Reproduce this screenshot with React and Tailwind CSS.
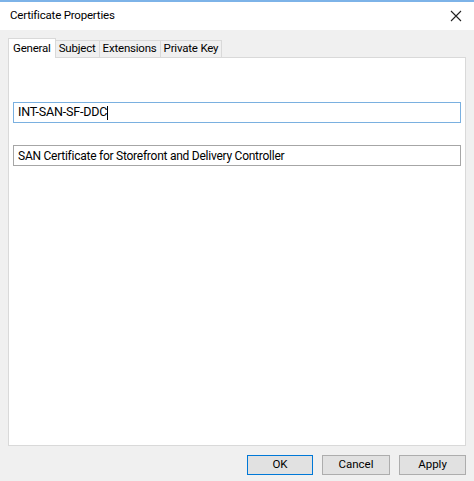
import React from 'react';

const tabs = ['General', 'Subject', 'Extensions', 'Private Key'];

export default function App() {
    return (
        <div className="w-[474px] h-[481px] bg-[#f0f0f0] flex flex-col overflow-hidden text-[#000] text-[12px]" style={{ fontFamily: 'Roboto, "Noto Sans", sans-serif' }}>
            <div className="h-[2px] bg-[#7db3e8]" />
            <div className="h-[28px] bg-white flex items-center justify-between pl-[10px] pr-[10px]">
                <span className="text-[11.5px] tracking-[-0.2px]">Certificate Properties</span>
                <svg width="12" height="12" viewBox="0 0 12 12" className="mr-[2px]">
                    <path d="M1 1 L11 11 M11 1 L1 11" stroke="#222" strokeWidth="1.1" />
                </svg>
            </div>
            <div className="flex-1 flex flex-col px-[8px] pt-[7px]">
                <div className="flex items-end h-[20px] text-[11.5px] tracking-[-0.2px]">
                    {tabs.map((t, i) => (
                        <div
                            key={t}
                            className={
                                i === 0
                                    ? 'h-[20px] px-[4px] bg-white border border-b-0 border-[#d9d9d9] flex items-center relative z-10 -mb-px'
                                    : 'h-[17px] px-[3px] bg-[#f0f0f0] border border-b-0 border-l-0 border-[#d9d9d9] flex items-center'
                            }
                        >
                            {t}
                        </div>
                    ))}
                </div>
                <div className="h-[389px] bg-white border border-[#d9d9d9] flex flex-col px-[4px] pt-[44px]">
                    <div className="h-[21px] border border-[#7ab0e0] flex items-center px-[4px] text-[12.5px] tracking-[-0.2px]">
                        <span>INT-SAN-SF-DDC</span>
                        <span className="w-px h-[14px] bg-black" />
                    </div>
                    <div className="h-[21px] mt-[22px] border border-[#a6a6a6] flex items-center px-[4px] text-[12px] tracking-[-0.25px]">
                        SAN Certificate for Storefront and Delivery Controller
                    </div>
                </div>
                <div className="flex justify-end gap-[9px] mt-[9px] pr-0 text-[11.5px]">
                    <button className="w-[66px] h-[20px] bg-[#e1e1e1] border border-[#0078d7] flex items-center justify-center">OK</button>
                    <button className="w-[68px] h-[20px] bg-[#e1e1e1] border border-[#adadad] flex items-center justify-center">Cancel</button>
                    <button className="w-[67px] h-[20px] bg-[#e1e1e1] border border-[#adadad] flex items-center justify-center">Apply</button>
                </div>
            </div>
        </div>
    );
}
